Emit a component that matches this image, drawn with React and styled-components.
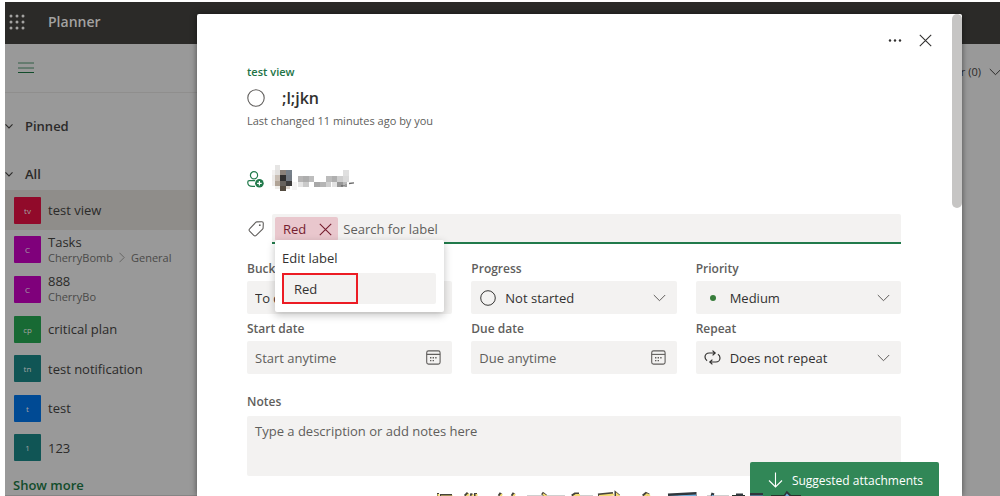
import React from "react";
import styled, { createGlobalStyle } from "styled-components";

const GlobalStyle = createGlobalStyle`
  * {
    box-sizing: border-box;
  }

  body {
    margin: 0;
    background-color: #fff;
    font-family: "Open Sans", "Noto Sans", sans-serif;
    font-size: 13px;
    color: #323130;
  }

  button, input, select, textarea {
    font: inherit;
    color: inherit;
    margin: 0;
    border: none;
    border-radius: 0;
    background: none;
    padding: 0;
  }

  button {
    cursor: pointer;
  }

  h1, h2, p, ul {
    margin: 0;
    padding: 0;
  }

  svg {
    display: block;
    flex: none;
  }
`;

const Page = styled.div`
  position: relative;
  display: flex;
  flex-direction: column;
  height: calc(100vh - 2px);
  margin: 2px 0 0 5px;
  overflow: hidden;
  background-color: #999;
`;

const TopBar = styled.header`
  display: flex;
  align-items: center;
  gap: 23px;
  flex: none;
  height: 42px;
  padding: 0 4px 3px;
  background-color: #2b2a28;
  color: #a3a2a1;
`;

const AppName = styled.h1`
  font-size: 14px;
  font-weight: 600;
`;

const Body = styled.div`
  display: flex;
  flex: 1;
  min-height: 0;
`;

const Sidebar = styled.nav`
  display: flex;
  flex-direction: column;
  width: 220px;
  color: #2b2a29;
`;

const MenuRow = styled.div`
  display: flex;
  align-items: center;
  flex: none;
  height: 49px;
  padding-left: 13px;
  border-bottom: 1px solid #8f8e8d;
`;

const GroupToggle = styled.button`
  display: flex;
  align-items: center;
  gap: 12px;
  flex: none;
  height: ${(props) => (props.$tall ? "65px" : "32px")};
  font-size: 13px;
  font-weight: 600;
`;

const PlanList = styled.ul`
  display: flex;
  flex-direction: column;
  flex: 1;
  min-height: 0;
  max-height: 280px;
  list-style: none;
`;

const PlanItem = styled.li`
  flex: 1;
  min-height: 0;
  background-color: ${(props) => (props.$selected ? "#8f8d8a" : "transparent")};
`;

const PlanLink = styled.a`
  display: flex;
  align-items: center;
  gap: 7px;
  height: 100%;
  padding: 1px 0 0 9px;
  color: inherit;
  text-decoration: none;
`;

const Tile = styled.span`
  display: flex;
  align-items: center;
  justify-content: center;
  width: 27px;
  height: 27px;
  border-radius: 1px;
  background-color: ${(props) => props.$color};
  color: #a3a3a3;
  font-size: 8px;
`;

const PlanText = styled.span`
  display: flex;
  flex-direction: column;
  line-height: 16px;
`;

const PlanGroup = styled.span`
  display: flex;
  align-items: center;
  gap: 6px;
  font-size: 11px;
  color: #4a4948;
`;

const ShowMore = styled.button`
  flex: none;
  height: 29px;
  padding: 8px 8px 0;
  border-bottom: 1px solid #858585;
  text-align: left;
  font-weight: 600;
  color: #124c2b;
`;

const FilterBar = styled.div`
  display: flex;
  justify-content: flex-end;
  flex: 1;
  height: 55px;
  margin-right: -2px;
`;

const FilterButton = styled.button`
  display: flex;
  align-items: center;
  gap: 8px;
  font-size: 11px;
  color: #2b2a29;
`;

const Dialog = styled.section`
  position: absolute;
  inset: 12px 38px 0 192px;
  display: flex;
  overflow: hidden;
  border-radius: 2px 2px 0 0;
  background-color: #fff;
`;

const DialogShadow = styled.div`
  position: absolute;
  inset: 12px 38px 0 192px;
  border-radius: 2px 2px 0 0;
  box-shadow: 0 0 6px rgba(0, 0, 0, 0.5);
`;

const DialogContent = styled.div`
  flex: 1;
  min-width: 0;
  padding: 0 50px;
`;

const ScrollTrack = styled.div`
  width: 11px;
  padding-left: 1px;
`;

const ScrollThumb = styled.div`
  height: 194px;
  border-radius: 5px;
  background-color: #c6c5c4;
`;

const DialogActions = styled.div`
  display: flex;
  justify-content: flex-end;
  align-items: center;
  gap: 17px;
  height: 50px;
  padding: 2px 0 0;
  margin-right: -31px;
`;

const IconButton = styled.button`
  display: flex;
`;

const PlanName = styled.a`
  display: block;
  width: max-content;
  font-size: 11px;
  line-height: 16px;
  font-weight: 600;
  color: #217346;
  text-decoration: none;
`;

const TitleRow = styled.div`
  display: flex;
  align-items: center;
  gap: 17px;
  height: 30px;
  margin-top: 3px;
`;

const Title = styled.h2`
  font-size: 16px;
  font-weight: 600;
`;

const Changed = styled.p`
  font-size: 11px;
  line-height: 16px;
  color: #605e5c;
`;

const AssignRow = styled.div`
  display: flex;
  align-items: center;
  gap: 8px;
  height: 32px;
  margin-top: 34px;
`;

const LabelRow = styled.div`
  position: relative;
  display: flex;
  align-items: center;
  gap: 7px;
  margin-top: 19px;
`;

const LabelBox = styled.div`
  display: flex;
  align-items: center;
  gap: 5px;
  flex: 1;
  height: 30px;
  padding: 2px 3px 0;
  border-bottom: 2px solid #217a4b;
  border-radius: 2px 2px 0 0;
  background-color: #f3f2f1;
`;

const LabelChip = styled.span`
  display: flex;
  align-items: center;
  gap: 13px;
  height: 24px;
  padding: 0 6px 0 8px;
  border-radius: 2px;
  background-color: #e9c7cd;
  color: #751d2f;
`;

const LabelInput = styled.input`
  flex: 1;
  min-width: 0;
  outline: none;

  &::placeholder {
    color: #605e5c;
    opacity: 1;
  }
`;

const LabelMenu = styled.div`
  position: absolute;
  top: 26px;
  left: 28px;
  z-index: 1;
  width: 169px;
  padding: 8px 8px 8px 7px;
  border-radius: 2px;
  background-color: #fff;
  box-shadow: 0 3px 9px rgba(0, 0, 0, 0.24);
`;

const MenuTitle = styled.p`
  line-height: 20px;
  margin-bottom: 5px;
`;

const MenuOption = styled.button`
  display: flex;
  width: 100%;
  height: 31px;
  border-radius: 2px;
  background-color: #f3f2f1;
`;

const Highlight = styled.span`
  display: flex;
  align-items: center;
  width: 76px;
  height: 100%;
  padding-left: 10px;
  border: 2px solid #ec1c24;
`;

const Fields = styled.div`
  display: grid;
  grid-template-columns: repeat(3, minmax(0, 1fr));
  column-gap: 19px;
  row-gap: 4px;
  margin-top: 14px;
`;

const FieldLabel = styled.label`
  display: block;
  height: 23px;
  line-height: 22px;
  font-weight: 600;
  font-size: 12px;
  color: #605e5c;
`;

const FieldBox = styled.div`
  display: flex;
  align-items: center;
  gap: 8px;
  height: 33px;
  padding: 0 11px 0 8px;
  border-radius: 2px;
  background-color: #f3f2f1;
`;

const IconSlot = styled.span`
  display: flex;
  justify-content: center;
  width: 18px;
`;

const Select = styled.select`
  flex: 1;
  min-width: 0;
  appearance: none;
  outline: none;
`;

const Notes = styled.div`
  margin-top: 17px;
`;

const NotesLabel = styled(FieldLabel)`
  height: 25px;
`;

const NotesArea = styled.textarea`
  display: block;
  width: 100%;
  height: 60px;
  padding: 5px 8px;
  border-radius: 2px;
  background-color: #f3f2f1;
  line-height: 20px;
  resize: none;
  outline: none;

  &::placeholder {
    color: #605e5c;
    opacity: 1;
  }
`;

const Suggested = styled.button`
  position: absolute;
  right: 23px;
  bottom: 0;
  display: flex;
  align-items: center;
  gap: 9px;
  height: 34px;
  padding: 2px 16px 0 18px;
  border-radius: 2px 2px 0 0;
  background-color: #318757;
  color: #fff;
  font-size: 12px;
`;

const Scribble = styled.svg`
  position: absolute;
  left: 240px;
  bottom: 0;
`;

const Chevron = ({ size = 13, color = "#605e5c", width = 1 }) => (
  <svg width={size} height={size} viewBox="0 0 13 13" fill="none" stroke={color} strokeWidth={width}>
    <path d="M0.8 4L6.5 9.7L12.2 4" />
  </svg>
);

const WaffleIcon = () => (
  <svg width="16" height="16" viewBox="0 0 16 16" fill="#a3a2a1">
    {[2, 8, 14].map((y) =>
      [2, 8, 14].map((x) => <circle key={`${x}-${y}`} cx={x} cy={y} r="1.5" />)
    )}
  </svg>
);

const MenuIcon = () => (
  <svg width="16" height="12" viewBox="0 0 16 12" stroke="#124c2b">
    <path d="M0 1H16M0 6H16" strokeOpacity="0.75" />
    <path d="M0 10.5H16" />
  </svg>
);

const CloseIcon = ({ color = "#323130" }) => (
  <svg width="13" height="13" viewBox="0 0 13 13" fill="none" stroke={color} strokeWidth="1.1">
    <path d="M0.8 0.8L12.2 12.2M12.2 0.8L0.8 12.2" />
  </svg>
);

const MoreIcon = () => (
  <svg width="14" height="13" viewBox="0 0 14 13" fill="#323130">
    <circle cx="2" cy="6.5" r="1.2" />
    <circle cx="7" cy="6.5" r="1.2" />
    <circle cx="12" cy="6.5" r="1.2" />
  </svg>
);

const CircleIcon = ({ size = 18, color = "#605e5c" }) => (
  <svg width={size} height={size} viewBox="0 0 18 18" fill="none" stroke={color} strokeWidth="1.1">
    <circle cx="9" cy="9" r="8.2" />
  </svg>
);

const PersonAddIcon = () => (
  <svg width="17" height="17" viewBox="0 0 17 17" fill="none" stroke="#217a4b" strokeWidth="1.2">
    <circle cx="7" cy="4.3" r="3.6" />
    <path d="M8 15.3H5.2C2.6 15.3 0.8 14 0.8 12V11.1C0.8 10.2 1.4 9.6 2.3 9.6H8" />
    <circle cx="12.4" cy="12.3" r="4.3" fill="#217a4b" stroke="none" />
    <path d="M12.4 10V14.6M10.1 12.3H14.7" stroke="#fff" />
  </svg>
);

const TagIcon = () => (
  <svg width="18" height="18" viewBox="0 0 18 18" fill="none" stroke="#605e5c" strokeWidth="1.1">
    <path d="M9.8 1.9L14.9 1.8C15.7 1.8 16.3 2.4 16.3 3.2L16.1 8C16.1 8.4 15.9 8.8 15.6 9.1L9.2 15.4C8.5 16.1 7.5 16.1 6.8 15.4L2.6 11.2C1.9 10.5 1.9 9.5 2.6 8.8L8.7 2.4C9 2.1 9.4 1.9 9.8 1.9Z" />
    <circle cx="12.8" cy="5.2" r="0.9" fill="#605e5c" stroke="none" />
  </svg>
);

const CalendarIcon = () => (
  <svg width="15" height="15" viewBox="0 0 15 15" fill="none" stroke="#605e5c" strokeWidth="1.1">
    <rect x="0.7" y="0.9" width="13.4" height="13.2" rx="1.8" />
    <path d="M0.7 4.4H14.1" />
    <path d="M6.6 7.8H8M9.2 7.8H10.6M4 10.6H5.4M6.6 10.6H8M4 7.8H5.4" strokeWidth="1.4" />
  </svg>
);

const RepeatIcon = () => (
  <svg width="17" height="15" viewBox="0 0 17 15" fill="none" stroke="#323130" strokeWidth="1.2">
    <path d="M8.5 0.6L11.2 3L8.6 5.4M11 3H5.2C2.8 3 1 4.8 1 7.1C1 8.7 1.8 10 3.1 10.7" />
    <path d="M8.4 14.4L5.8 12L8.4 9.6M6 12H11.8C14.2 12 16 10.2 16 7.9C16 6.3 15.2 5 13.9 4.3" />
  </svg>
);

const DotIcon = () => (
  <svg width="8" height="8" viewBox="0 0 8 8">
    <circle cx="4" cy="4" r="3" fill="#377d3b" />
  </svg>
);

const ArrowDownIcon = () => (
  <svg width="15" height="16" viewBox="0 0 15 16" fill="none" stroke="#fff" strokeWidth="1.1">
    <path d="M7.5 0.5V14.8M1 8.5L7.5 15L14 8.5" />
  </svg>
);

const mosaic = [
  [3, 0, 5, 5, "#e6e5e4"], [0, 5, 3, 5, "#f3f1f0"], [3, 5, 5, 5, "#e2e0de"],
  [8, 5, 6, 5, "#8a817a"], [14, 5, 6, 5, "#76808a"],
  [0, 10, 3, 6, "#eceae8"], [3, 10, 5, 6, "#c9beb4"],
  [8, 10, 6, 6, "#302f2f"], [14, 10, 6, 6, "#747b84"],
  [0, 16, 3, 5, "#efedec"], [3, 16, 5, 5, "#b0a396"],
  [8, 16, 6, 5, "#67625d"], [14, 16, 6, 5, "#3c3b3b"],
  [3, 21, 5, 3, "#eeece9"], [8, 21, 6, 5, "#544b40"], [14, 21, 4, 3, "#dbd4cc"],
  [20, 17, 5, 8, "#f5f4f4"],
  [26, 11, 5, 6, "#b6b5b5"], [31, 11, 6, 6, "#adadad"], [37, 11, 5, 6, "#bdbdbd"],
  [26, 17, 5, 5, "#e5e5e5"], [31, 17, 6, 5, "#cacaca"],
  [42, 17, 6, 5, "#a8a8a8"], [48, 17, 6, 5, "#b5b5b5"], [54, 17, 5, 5, "#cfcfcf"],
  [54, 11, 6, 6, "#bcbcbc"], [60, 11, 5, 6, "#afafaf"], [65, 11, 6, 6, "#cecece"],
  [71, 5, 6, 6, "#e0e0e0"], [71, 11, 6, 6, "#dadada"],
  [60, 17, 5, 5, "#e3e3e3"], [65, 17, 6, 5, "#989898"], [71, 17, 4, 3, "#b9b9b9"],
];

const AssigneeMosaic = () => (
  <svg width="84" height="28" viewBox="0 0 84 28" role="img" aria-label="Assignee">
    {mosaic.map(([x, y, w, h, fill]) => (
      <rect key={`${x}-${y}`} x={x} y={y} width={w} height={h} fill={fill} />
    ))}
    <path d="M69 20.8H73M74 22V19.5M77 18.5L82 17.8" stroke="#686868" strokeWidth="1.3" />
  </svg>
);

const yellowMarks =
  "M0.5 6V3M3 5.5H15M28 6L31 3M34 6L35 3.5M38.5 6V3M62 6L64 3M75 6L77 3M105 3L109 6M135 6L138 4H142M161 5L176 3.5M179 6V3.5L182 6M206 6L209 3.5L212 5";
const blueMarks = "M231 5L258 3.5V6M275 6L276 3M299 5H306M313 4.5H326M348 6L350 3L353 6";

const Watermark = () => (
  <Scribble width="380" height="6" viewBox="0 0 380 6" fill="none" aria-hidden="true">
    <path d="M90 5.5H128M137 5.5H156M270 5.5H292" stroke="#cfcfcf" />
    <path d="M295 5.5H308M334 5.5H364" stroke="#26352b" />
    <path d={yellowMarks} stroke="#45433a" strokeWidth="3" />
    <path d={yellowMarks} transform="translate(1 1)" stroke="#f5dc75" strokeWidth="2" />
    <path d={blueMarks} stroke="#2f363b" strokeWidth="3" />
    <path d={blueMarks} transform="translate(0 2)" stroke="#72b2e0" strokeWidth="2" />
  </Scribble>
);

const plans = [
  { name: "test view", initials: "tv", color: "#910a2a", selected: true },
  { name: "Tasks", initials: "C", color: "#7f007b", group: "CherryBomb", channel: "General" },
  { name: "888", initials: "C", color: "#7f007b", group: "CherryBo" },
  { name: "critical plan", initials: "cp", color: "#186a34" },
  { name: "test notification", initials: "tn", color: "#105555" },
  { name: "test", initials: "t", color: "#004a94" },
  { name: "123", initials: "1", color: "#105555" },
];

const SelectField = ({ id, label, value, icon }) => (
  <div>
    <FieldLabel htmlFor={id}>{label}</FieldLabel>
    <FieldBox>
      {icon && <IconSlot>{icon}</IconSlot>}
      <Select id={id} defaultValue={value}>
        <option>{value}</option>
      </Select>
      <Chevron />
    </FieldBox>
  </div>
);

const DateField = ({ id, label, placeholder }) => (
  <div>
    <FieldLabel htmlFor={id}>{label}</FieldLabel>
    <FieldBox>
      <LabelInput id={id} placeholder={placeholder} />
      <CalendarIcon />
    </FieldBox>
  </div>
);

const PlanNav = () => (
  <Sidebar>
    <MenuRow>
      <IconButton aria-label="Toggle navigation">
        <MenuIcon />
      </IconButton>
    </MenuRow>
    <GroupToggle $tall>
      <Chevron size={8} color="#2b2a29" width={1.8} />
      Pinned
    </GroupToggle>
    <GroupToggle>
      <Chevron size={8} color="#2b2a29" width={1.8} />
      All
    </GroupToggle>
    <PlanList>
      {plans.map((plan) => (
        <PlanItem key={plan.name} $selected={plan.selected}>
          <PlanLink href="#">
            <Tile $color={plan.color}>{plan.initials}</Tile>
            <PlanText>
              <span>{plan.name}</span>
              {plan.group && (
                <PlanGroup>
                  {plan.group}
                  {plan.channel && (
                    <>
                      <svg width="6" height="11" viewBox="0 0 6 11" fill="none" stroke="#686766">
                        <path d="M0.5 0.8L5.2 5.5L0.5 10.2" />
                      </svg>
                      {plan.channel}
                    </>
                  )}
                </PlanGroup>
              )}
            </PlanText>
          </PlanLink>
        </PlanItem>
      ))}
    </PlanList>
    <ShowMore>Show more</ShowMore>
  </Sidebar>
);

const TaskDialog = () => (
  <>
    <DialogShadow />
    <Dialog role="dialog" aria-label="Task details">
      <DialogContent>
        <DialogActions>
          <IconButton aria-label="More options">
            <MoreIcon />
          </IconButton>
          <IconButton aria-label="Close">
            <CloseIcon />
          </IconButton>
        </DialogActions>
        <PlanName href="#">test view</PlanName>
        <TitleRow>
          <IconButton aria-label="Mark complete">
            <CircleIcon />
          </IconButton>
          <Title>;l;jkn</Title>
        </TitleRow>
        <Changed>Last changed 11 minutes ago by you</Changed>
        <AssignRow>
          <IconButton aria-label="Assign">
            <PersonAddIcon />
          </IconButton>
          <AssigneeMosaic />
        </AssignRow>
        <LabelRow>
          <TagIcon />
          <LabelBox>
            <LabelChip>
              Red
              <IconButton aria-label="Remove Red">
                <CloseIcon color="#751d2f" />
              </IconButton>
            </LabelChip>
            <LabelInput aria-label="Search for label" placeholder="Search for label" />
          </LabelBox>
          <LabelMenu>
            <MenuTitle>Edit label</MenuTitle>
            <MenuOption>
              <Highlight>Red</Highlight>
            </MenuOption>
          </LabelMenu>
        </LabelRow>
        <Fields>
          <SelectField id="bucket" label="Bucket" value="To do" />
          <SelectField
            id="progress"
            label="Progress"
            value="Not started"
            icon={<CircleIcon size={16} color="#323130" />}
          />
          <SelectField id="priority" label="Priority" value="Medium" icon={<DotIcon />} />
          <DateField id="start" label="Start date" placeholder="Start anytime" />
          <DateField id="due" label="Due date" placeholder="Due anytime" />
          <SelectField id="repeat" label="Repeat" value="Does not repeat" icon={<RepeatIcon />} />
        </Fields>
        <Notes>
          <NotesLabel htmlFor="notes">Notes</NotesLabel>
          <NotesArea id="notes" placeholder="Type a description or add notes here" />
        </Notes>
      </DialogContent>
      <ScrollTrack>
        <ScrollThumb />
      </ScrollTrack>
      <Suggested>
        <ArrowDownIcon />
        Suggested attachments
      </Suggested>
      <Watermark />
    </Dialog>
  </>
);

const App = () => (
  <>
    <GlobalStyle />
    <Page>
      <TopBar>
        <WaffleIcon />
        <AppName>Planner</AppName>
      </TopBar>
      <Body>
        <PlanNav />
        <FilterBar>
          <FilterButton>
            Filter (0)
            <Chevron size={13} color="#2b2a29" />
          </FilterButton>
        </FilterBar>
      </Body>
      <TaskDialog />
    </Page>
  </>
);

export default App;
